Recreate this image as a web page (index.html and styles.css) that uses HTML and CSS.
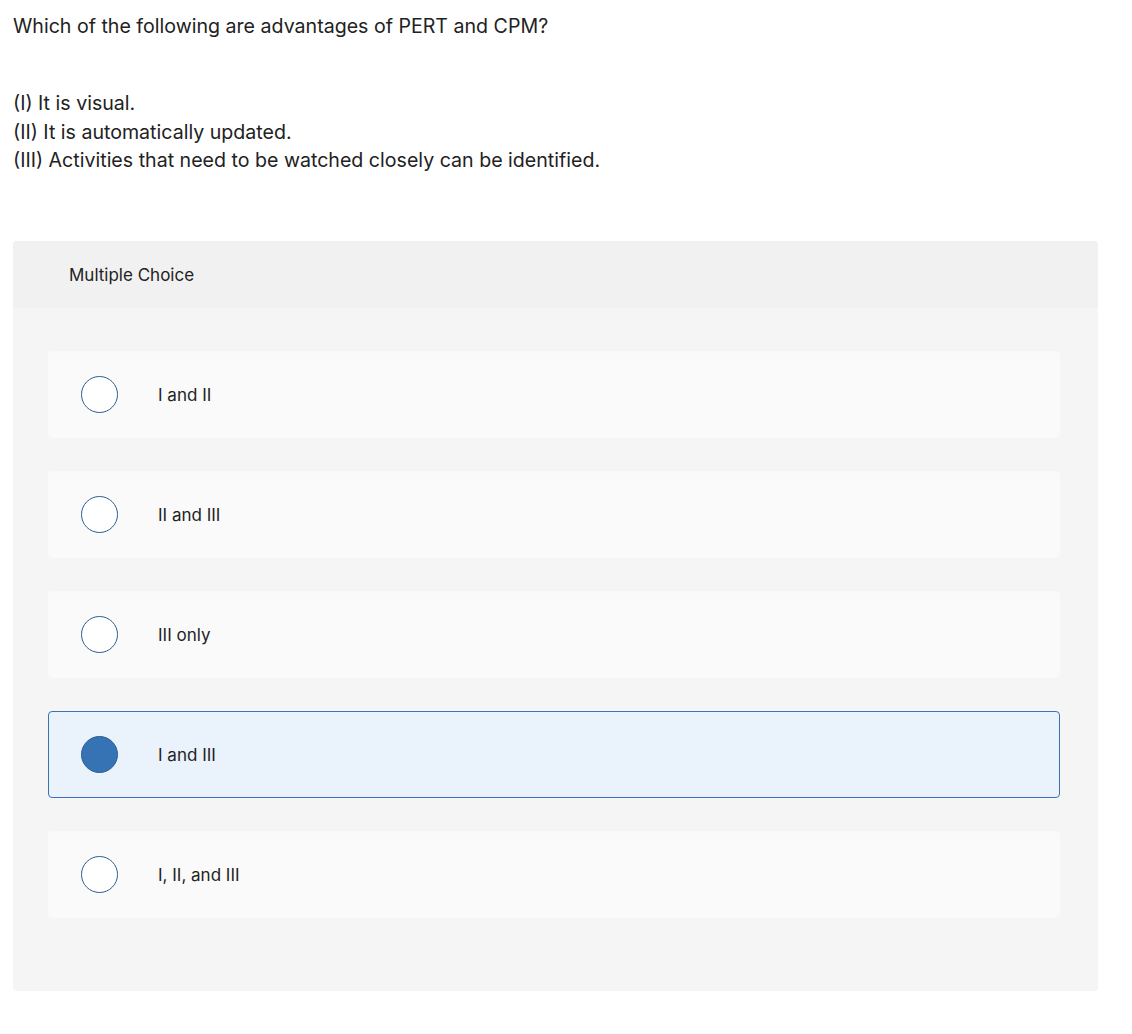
FILE: index.html
```html
<!DOCTYPE html>
<html>
<head>
<meta charset="utf-8">
<link rel="stylesheet" href="styles.css">
</head>
<body>
<div class="page">
  <p class="question">Which of the following are advantages of PERT and CPM?</p>
  <div class="statements">
    <p>(I) It is visual.</p>
    <p>(II) It is automatically updated.</p>
    <p>(III) Activities that need to be watched closely can be identified.</p>
  </div>
  <div class="panel">
    <div class="panel-head">Multiple Choice</div>
    <div class="panel-body">
      <div class="option"><span class="radio"></span><span class="label">I and II</span></div>
      <div class="option"><span class="radio"></span><span class="label">II and III</span></div>
      <div class="option"><span class="radio"></span><span class="label">III only</span></div>
      <div class="option selected"><span class="radio"></span><span class="label">I and III</span></div>
      <div class="option"><span class="radio"></span><span class="label">I, II, and III</span></div>
    </div>
  </div>
</div>
</body>
</html>
```
FILE: styles.css
```css
* { box-sizing: border-box; }
body {
  margin: 0;
  background: #ffffff;
  font-family: Inter, "Open Sans", sans-serif;
  color: #222222;
}
.page {
  padding: 12px 34px 0 13px;
}
p { margin: 0; }
.question {
  font-size: 19.6px;
  line-height: 28px;
}
.statements {
  margin-top: 49px;
  font-size: 19.6px;
  line-height: 28.5px;
}
.panel {
  margin-top: 66px;
  width: 1085px;
  border-radius: 4px;
  background: #f5f5f5;
  overflow: hidden;
}
.panel-head {
  height: 67px;
  background: #f1f1f1;
  padding-left: 56px;
  padding-top: 2px;
  display: flex;
  align-items: center;
  font-size: 17px;
}
.panel-body {
  padding: 43px 38px 73px 35px;
  display: flex;
  flex-direction: column;
  gap: 33px;
}
.option {
  height: 87px;
  background: #fafafa;
  border-radius: 4px;
  border: 1px solid #fafafa;
  display: flex;
  align-items: center;
  padding-left: 32px;
}
.radio {
  width: 37px;
  height: 37px;
  border-radius: 50%;
  border: 1px solid #2d5f94;
  background: #ffffff;
  flex: none;
}
.label {
  margin-left: 40px;
  padding-top: 2px;
  font-size: 17px;
}
.option.selected {
  background: #eaf2fc;
  border-color: #3a73b5;
}
.option.selected .radio {
  background: #3573b5;
  border-color: #2d5f94;
}
```
